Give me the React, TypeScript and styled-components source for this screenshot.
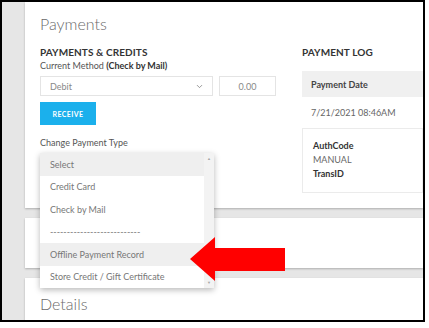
import React from 'react';
import styled, { createGlobalStyle } from 'styled-components';
import { ChevronDown } from 'lucide-react';

const GlobalStyle = createGlobalStyle`
  html, body {
    margin: 0;
    padding: 0;
    background: #fff;
  }
  body {
    font-family: Lato, "Open Sans", Arial, sans-serif;
    color: #555;
  }
`;

const paymentTypes = [
  { label: 'Select', active: true },
  { label: 'Credit Card' },
  { label: 'Check by Mail' },
  { label: '---------------------------' },
  { label: 'Offline Payment Record', active: true },
  { label: 'Store Credit / Gift Certificate' }
];

export default function App() {
  return (
    <>
      <GlobalStyle />
      <Frame>
        <Page>
          <Card>
            <CardTitle>Payments</CardTitle>
            <Columns>
              <LeftColumn>
                <SectionHeading>PAYMENTS &amp; CREDITS</SectionHeading>
                <FieldLabel>
                  Current Method <strong>(Check by Mail)</strong>
                </FieldLabel>
                <FieldRow>
                  <SelectBox>
                    <span>Debit</span>
                    <ChevronDown size={9} strokeWidth={2} color="#777" />
                  </SelectBox>
                  <AmountBox>0.00</AmountBox>
                </FieldRow>
                <ReceiveButton>RECEIVE</ReceiveButton>
                <FieldLabel>Change Payment Type</FieldLabel>
                <DropdownAnchor>
                  <DropdownList>
                    <Options>
                      {paymentTypes.map(t => (
                        <Option key={t.label} $active={!!t.active}>
                          {t.label}
                        </Option>
                      ))}
                    </Options>
                    <ScrollTrack>
                      <ScrollArrow>&#9650;</ScrollArrow>
                      <ScrollArrow>&#9660;</ScrollArrow>
                    </ScrollTrack>
                  </DropdownList>
                </DropdownAnchor>
              </LeftColumn>
              <RightColumn>
                <SectionHeading>PAYMENT LOG</SectionHeading>
                <LogHeader>Payment Date</LogHeader>
                <LogDate>7/21/2021 08:46AM</LogDate>
                <LogDetail>
                  <DetailKey>AuthCode</DetailKey>
                  <DetailValue>MANUAL</DetailValue>
                  <DetailKey>TransID</DetailKey>
                </LogDetail>
              </RightColumn>
            </Columns>
          </Card>
          <Card $height={50} />
          <Card $height={60}>
            <CardTitle $top={16}>Details</CardTitle>
          </Card>
        </Page>
        <Arrow width="96" height="44" viewBox="0 0 96 44">
          <polygon points="0,22 25,0 25,11 95,11 95,34 25,34 25,44" fill="#ff0000" />
        </Arrow>
      </Frame>
    </>
  );
}

const Frame = styled.div`
  position: relative;
  width: 425px;
  height: 322px;
  box-sizing: border-box;
  border: 2px solid #000;
  background: #e6e6e6;
  overflow: hidden;
`;

const Page = styled.div`
  display: flex;
  flex-direction: column;
  gap: 10px;
  padding-left: 23px;
`;

const Card = styled.div<{ $height?: number }>`
  position: relative;
  background: #fff;
  height: ${props => (props.$height ? `${props.$height}px` : '206px')};
  padding-left: 15px;
  box-shadow: 0 1px 2px rgba(0, 0, 0, 0.25);
  flex-shrink: 0;
`;

const CardTitle = styled.div<{ $top?: number }>`
  padding-top: ${props => props.$top ?? 12}px;
  font-size: 16px;
  line-height: 20px;
  font-weight: 300;
  color: #6a6a6a;
`;

const Columns = styled.div`
  display: flex;
  margin-top: 12px;
  gap: 25px;
`;

const LeftColumn = styled.div`
  position: relative;
  width: 237px;
  display: flex;
  flex-direction: column;
  align-items: flex-start;
`;

const RightColumn = styled.div`
  flex: 1;
  display: flex;
  flex-direction: column;
`;

const SectionHeading = styled.div`
  font-size: 10px;
  line-height: 12px;
  font-weight: 700;
  color: #333;
  letter-spacing: 0.1px;
`;

const FieldLabel = styled.div`
  margin-top: 2px;
  font-size: 9px;
  line-height: 12px;
  color: #555;

  strong {
    font-weight: 700;
    color: #333;
  }
`;

const FieldRow = styled.div`
  display: flex;
  gap: 6px;
  margin-top: 4px;
`;

const SelectBox = styled.div`
  width: 173px;
  height: 20px;
  box-sizing: border-box;
  border: 1px solid #e4e4e4;
  display: flex;
  align-items: center;
  justify-content: space-between;
  padding: 0 8px 0 9px;
  font-size: 9px;
  color: #888;
`;

const AmountBox = styled.div`
  width: 57px;
  height: 20px;
  box-sizing: border-box;
  border: 1px solid #e4e4e4;
  display: flex;
  align-items: center;
  justify-content: center;
  font-size: 9px;
  color: #888;
`;

const ReceiveButton = styled.div`
  margin-top: 6px;
  margin-bottom: 10px;
  width: 56px;
  height: 23px;
  background: #1bb0ec;
  color: #fff;
  font-size: 7px;
  font-weight: 700;
  letter-spacing: 0.4px;
  display: flex;
  align-items: center;
  justify-content: center;
`;

const DropdownAnchor = styled.div`
  position: relative;
  width: 174px;
  height: 4px;
`;

const DropdownList = styled.div`
  position: absolute;
  z-index: 10;
  top: 4px;
  left: 0;
  width: 174px;
  display: flex;
  background: #fff;
  box-shadow: 0 2px 6px rgba(0, 0, 0, 0.28);
`;

const Options = styled.div`
  flex: 1;
  display: flex;
  flex-direction: column;
`;

const Option = styled.div<{ $active: boolean }>`
  height: 22.5px;
  display: flex;
  align-items: center;
  padding-left: 10px;
  font-size: 9px;
  color: #777;
  background: ${props => (props.$active ? '#efefef' : '#fff')};
`;

const ScrollTrack = styled.div`
  width: 10px;
  background: #f3f3f3;
  display: flex;
  flex-direction: column;
  justify-content: space-between;
  align-items: center;
  padding: 3px 0;
`;

const ScrollArrow = styled.span`
  font-size: 4px;
  line-height: 5px;
  color: #a5a5a5;
`;

const LogHeader = styled.div`
  margin-top: 13px;
  height: 26px;
  background: #f0f0f0;
  display: flex;
  align-items: center;
  padding-left: 9px;
  font-size: 9px;
  font-weight: 700;
  color: #444;
`;

const LogDate = styled.div`
  height: 31px;
  display: flex;
  align-items: center;
  padding-left: 9px;
  font-size: 9px;
  color: #666;
`;

const LogDetail = styled.div`
  height: 65px;
  box-sizing: border-box;
  border: 1px solid #ebebeb;
  padding: 10px 10px;
  display: flex;
  flex-direction: column;
`;

const DetailKey = styled.div`
  font-size: 9px;
  line-height: 14px;
  font-weight: 700;
  color: #333;

  & + & {
    margin-top: 4px;
  }
`;

const DetailValue = styled.div`
  font-size: 9px;
  line-height: 14px;
  color: #666;
`;

const Arrow = styled.svg`
  position: absolute;
  z-index: 20;
  left: 188px;
  top: 235px;
`;
